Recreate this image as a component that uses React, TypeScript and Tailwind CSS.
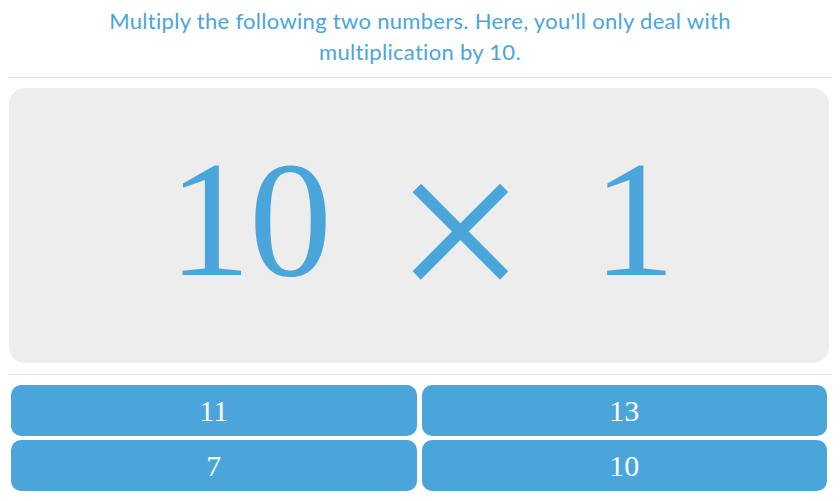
export default function App() {
  const answers = ['11', '13', '7', '10'];
  const serif = { fontFamily: '"Liberation Serif", "Times New Roman", serif' };

  return (
    <div className="w-[840px] h-[501px] bg-white overflow-hidden">
      <div className="ml-2 w-[824px]">
        <p
          className="pt-[5px] pb-[10px] text-center text-[22px] leading-[31px] tracking-[0.3px] text-[#4aa6da]"
          style={{ fontFamily: 'Lato, "Noto Sans", sans-serif' }}
        >
          Multiply the following two numbers. Here, you'll only deal with
          <br />
          multiplication by 10.
        </p>
        <div className="h-px bg-[#e6e6e6]" />

        <div
          className="mt-[10px] ml-px w-[820px] h-[275px] rounded-2xl bg-[#ededed] flex items-start pl-[159px] leading-none text-[#4aa6da]"
          style={serif}
        >
          <span className="mt-[48px] text-[166px] tracking-[-2px]">10</span>
          <span className="mt-[26px] ml-[64px] text-[235px]">×</span>
          <span className="mt-[48px] ml-[66px] text-[166px]">1</span>
        </div>

        <div className="mt-[11px] h-px bg-[#e6e6e6]" />

        <div className="mt-[10px] ml-[3px] w-[816px] grid grid-cols-2 gap-x-[5px] gap-y-[4px]">
          {answers.map((a) => (
            <button
              key={a}
              className="h-[51px] rounded-[10px] bg-[#4aa6da] text-white text-[30px] leading-none flex items-center justify-center"
              style={serif}
            >
              {a}
            </button>
          ))}
        </div>
      </div>
    </div>
  );
}
